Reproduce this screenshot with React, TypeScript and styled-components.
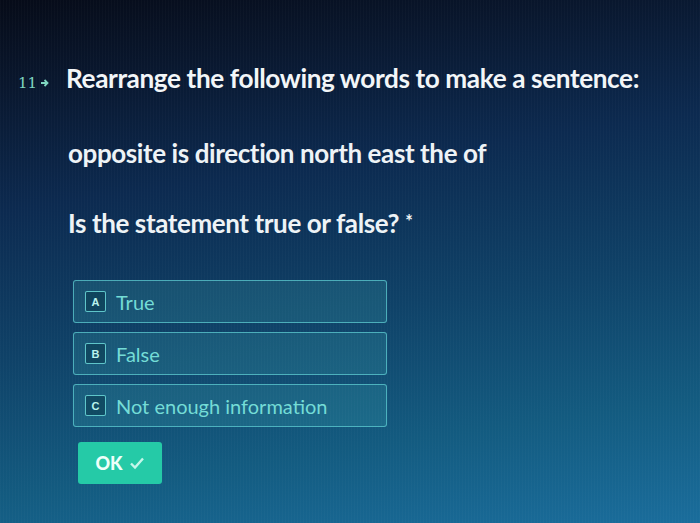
import React from "react";
import styled, { createGlobalStyle } from "styled-components";

const Global = createGlobalStyle`
  html, body { margin: 0; padding: 0; }
  body { font-family: "Lato", "Open Sans", sans-serif; }
`;

const Screen = styled.div`
  width: 700px;
  height: 523px;
  overflow: hidden;
  box-sizing: border-box;
  padding: 62px 0 0 18px;
  background:
    repeating-linear-gradient(90deg, rgba(255,255,255,0.02) 0 1px, transparent 1px 3px),
    linear-gradient(172deg, #060b18 0%, #09172e 14%, #0c2a50 34%, #0f4268 58%, #135b80 80%, #1a6d9c 100%);
  color: #ffffff;
`;

const QuestionRow = styled.div`
  display: flex;
  align-items: baseline;
  gap: 10px;
`;

const Counter = styled.span`
  display: inline-flex;
  align-items: center;
  gap: 3px;
  width: 38px;
  font-size: 15px;
  color: #7fd6c0;
  font-family: "DejaVu Serif", serif;
`;

const Title = styled.h1`
  margin: 0;
  font-size: 26.2px;
  font-weight: 700;
  letter-spacing: -0.4px;
  color: #f3f6f8;
`;

const Body = styled.div`
  padding-left: 50px;
  display: flex;
  flex-direction: column;
`;

const Line = styled.p<{ $top: number }>`
  margin: ${(p) => p.$top}px 0 0;
  font-size: 26px;
  font-weight: 700;
  letter-spacing: -0.4px;
  color: #eef3f6;
`;

const Required = styled.span`
  font-size: 18px;
  vertical-align: 5px;
  margin-left: 6px;
`;

const Choices = styled.div`
  margin-top: 41px;
  margin-left: 5px;
  display: flex;
  flex-direction: column;
  gap: 9px;
  width: 314px;
`;

const Choice = styled.div`
  height: 43px;
  box-sizing: border-box;
  display: flex;
  align-items: center;
  gap: 10px;
  padding: 0 11px;
  border: 1.5px solid rgba(98, 210, 214, 0.7);
  border-radius: 3px;
  background: rgba(80, 200, 200, 0.17);
`;

const Key = styled.span`
  width: 21px;
  height: 21px;
  box-sizing: border-box;
  display: inline-flex;
  align-items: center;
  justify-content: center;
  border: 1.5px solid rgba(110, 220, 220, 0.85);
  border-radius: 2px;
  background: rgba(10, 60, 80, 0.6);
  font-family: "Liberation Sans", sans-serif;
  font-size: 11px;
  font-weight: 700;
  color: #b9f3ee;
`;

const ChoiceText = styled.span`
  font-size: 20px;
  font-weight: 400;
  color: #74dcd6;
`;

const OkButton = styled.button`
  margin-top: 15px;
  margin-left: 10px;
  width: 84px;
  height: 42px;
  border: none;
  border-radius: 3px;
  background: #25caa7;
  display: flex;
  align-items: center;
  justify-content: center;
  gap: 6px;
  font-family: "Lato", sans-serif;
  font-size: 18px;
  font-weight: 900;
  color: #eefffa;
`;

export default function App() {
  return (
    <>
      <Global />
      <Screen>
        <QuestionRow>
          <Counter>
            11
            <svg width="10" height="10" viewBox="0 0 10 10">
              <path d="M1 5h6M4.5 2l3 3-3 3" stroke="#7fd6c0" strokeWidth="1.8" fill="none" />
            </svg>
          </Counter>
          <Title>Rearrange the following words to make a sentence:</Title>
        </QuestionRow>
        <Body>
          <Line $top={43}>opposite is direction north east the of</Line>
          <Line $top={38}>
            Is the statement true or false?<Required>*</Required>
          </Line>
          <Choices>
            {[
              ["A", "True"],
              ["B", "False"],
              ["C", "Not enough information"],
            ].map(([k, t]) => (
              <Choice key={k}>
                <Key>{k}</Key>
                <ChoiceText>{t}</ChoiceText>
              </Choice>
            ))}
          </Choices>
          <OkButton>
            OK
            <svg width="16" height="14" viewBox="0 0 16 14">
              <path d="M2 7.5l4 4 8-9" stroke="#c4f7ea" strokeWidth="2.4" fill="none" />
            </svg>
          </OkButton>
        </Body>
      </Screen>
    </>
  );
}
